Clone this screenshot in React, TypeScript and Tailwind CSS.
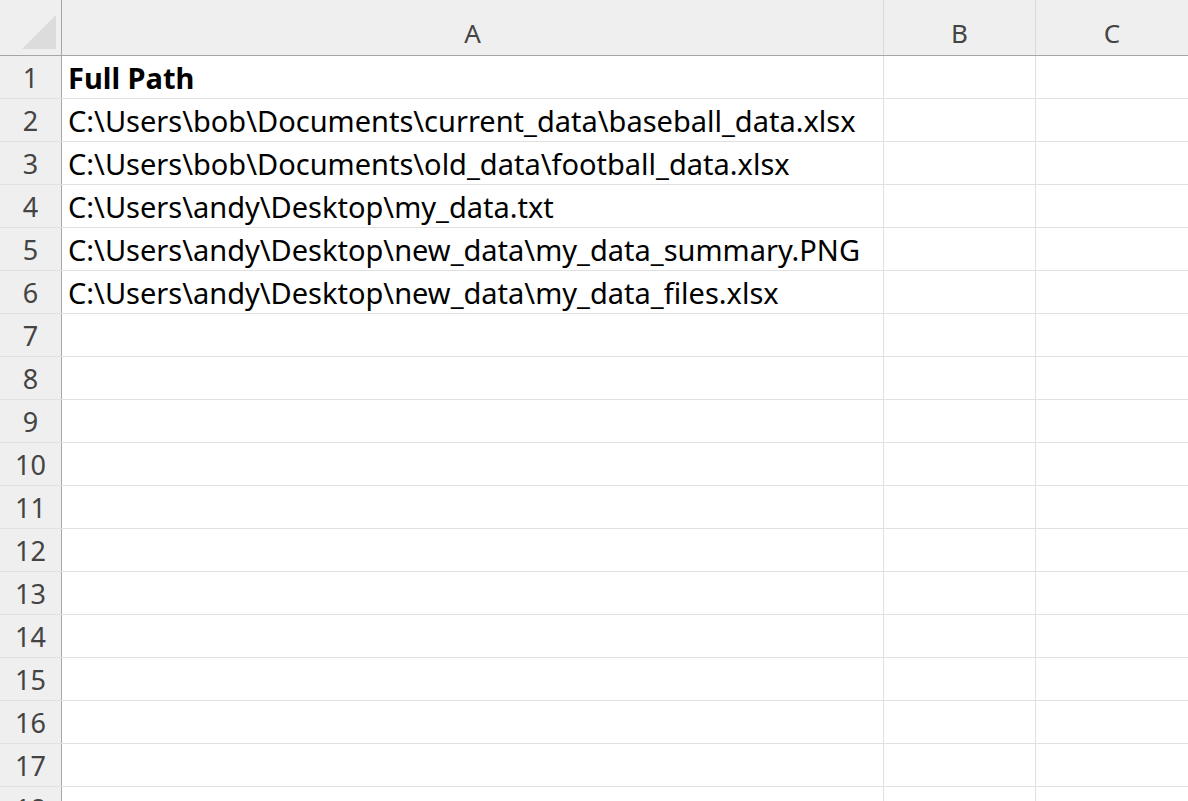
const rows: string[] = [
  "Full Path",
  "C:\\Users\\bob\\Documents\\current_data\\baseball_data.xlsx",
  "C:\\Users\\bob\\Documents\\old_data\\football_data.xlsx",
  "C:\\Users\\andy\\Desktop\\my_data.txt",
  "C:\\Users\\andy\\Desktop\\new_data\\my_data_summary.PNG",
  "C:\\Users\\andy\\Desktop\\new_data\\my_data_files.xlsx",
]

export default function App() {
  const nums = Array.from({ length: 18 }, (_, i) => i + 1)
  return (
    <div
      className="w-[1188px] h-[801px] overflow-hidden bg-white text-[#000]"
      style={{ fontFamily: "'Noto Sans', 'Open Sans', sans-serif" }}
    >
      <div className="flex h-[56px] bg-[#efefef] border-b border-[#a6a6a6]">
        <div className="w-[62px] shrink-0 border-r border-[#a6a6a6] flex items-end justify-end p-[6px] pr-[5px]">
          <div className="w-0 h-0 border-l-[34px] border-l-transparent border-b-[34px] border-b-[#dcdcdc]" />
        </div>
        <div className="w-[822px] shrink-0 border-r border-[#dadada] flex items-end justify-center pb-[2px] text-[26px] text-[#444]">A</div>
        <div className="w-[152px] shrink-0 border-r border-[#dadada] flex items-end justify-center pb-[2px] text-[26px] text-[#444]">B</div>
        <div className="w-[152px] shrink-0 flex items-end justify-center pb-[2px] text-[26px] text-[#444]">C</div>
      </div>
      {nums.map((n) => (
        <div key={n} className="flex h-[43px] border-b border-[#e1e1e1]">
          <div className="w-[62px] shrink-0 bg-[#efefef] border-r border-[#a6a6a6] flex items-center justify-center text-[27px] text-[#444] pt-[2px]">
            {n}
          </div>
          <div
            className={`w-[822px] shrink-0 border-r border-[#e1e1e1] flex items-center pl-[6px] pt-[2px] text-[29px] whitespace-nowrap overflow-visible ${n === 1 ? "font-bold" : ""}`}
          >
            {rows[n - 1] ?? ""}
          </div>
          <div className="w-[152px] shrink-0 border-r border-[#e1e1e1]" />
          <div className="w-[152px] shrink-0" />
        </div>
      ))}
    </div>
  )
}
